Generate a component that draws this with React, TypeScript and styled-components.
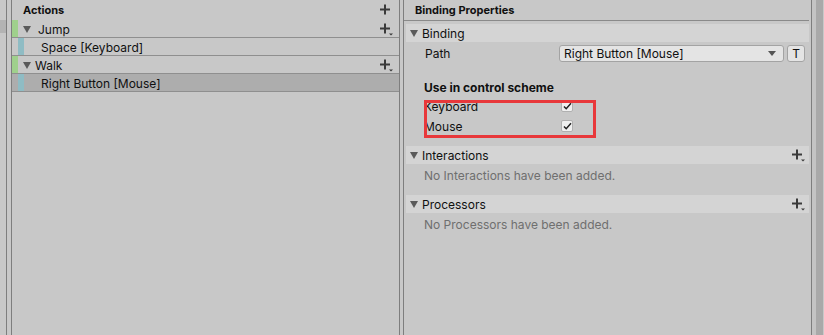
import React from "react"
import styled, { createGlobalStyle } from "styled-components"

const Global = createGlobalStyle`
    html, body {
        margin: 0;
        padding: 0;
        background: #c8c8c8;
    }
    body {
        font-family: Inter, "Noto Sans", sans-serif;
        font-size: 12px;
        color: #101010;
    }
`

const Window = styled.div`
    display: flex;
    width: 824px;
    height: 335px;
    overflow: hidden;
    background: #c8c8c8;
`

const Strip = styled.div<{ $w: number; $bg?: string }>`
    flex: 0 0 ${p => p.$w}px;
    background: ${p => p.$bg || "#c8c8c8"};
    position: relative;
`

const Line = styled.div`
    flex: 0 0 1px;
    background: #7e7e7e;
`

const OtherTab = styled.div`
    margin-top: 20px;
    height: 13px;
    background: #b3b3b3;
`

const Panel = styled.div<{ $w: number }>`
    flex: 0 0 ${p => p.$w}px;
    display: flex;
    flex-direction: column;
`

const PanelHeader = styled.div<{ $line?: boolean }>`
    height: 20px;
    display: flex;
    align-items: center;
    justify-content: space-between;
    padding: 0 6px 0 11px;
    font-size: 11px;
    font-weight: 700;
    box-sizing: border-box;
    ${p => p.$line && "border-bottom: 1px solid #8a8a8a; margin-right: 2px; height: 21px;"}
`

const Row = styled.div<{ $selected?: boolean }>`
    height: 18px;
    box-sizing: border-box;
    display: flex;
    align-items: center;
    border-bottom: 1px solid #8f8f8f;
    background: ${p => (p.$selected ? "#adadad" : "transparent")};
    padding-right: 6px;
    padding-top: 1px;
`

const Bar = styled.div<{ $color: string; $indent?: number }>`
    width: 6px;
    align-self: stretch;
    margin: -1px 0 0 ${p => p.$indent || 0}px;
    background: ${p => p.$color};
`

const Triangle = styled.span`
    width: 0;
    height: 0;
    border-left: 4px solid transparent;
    border-right: 4px solid transparent;
    border-top: 7px solid #5a5a5a;
    margin: 0 4px 0 5px;
`

const Label = styled.span<{ $pad?: number }>`
    flex: 1;
    padding-left: ${p => p.$pad || 0}px;
    white-space: nowrap;
`

const PlusIcon = ({ more }: { more?: boolean }) => (
    <svg width="13" height="13" viewBox="0 0 13 13">
        <path d="M5 0.5v10M0 5.5h10" stroke="#3a3a3a" strokeWidth="2" />
        {more && <path d="M9 10.5h4l-2 2z" fill="#3a3a3a" />}
    </svg>
)

const Foldout = styled.div<{ $top?: number }>`
    height: 18px;
    margin: ${p => p.$top || 0}px 2px 0 2px;
    background: #d4d4d4;
    display: flex;
    align-items: center;
    padding-right: 4px;
    font-size: 12px;

    ${Triangle} {
        margin: 0 4px 0 4px;
    }
`

const Field = styled.div`
    height: 19px;
    margin: 2px 6px 0 21px;
    display: flex;
    align-items: center;
    font-size: 12px;
`

const FieldLabel = styled.span`
    width: 134px;
`

const Dropdown = styled.div`
    flex: 1;
    height: 17px;
    box-sizing: border-box;
    border: 1px solid #a3a3a3;
    border-radius: 3px;
    background: #e4e4e4;
    display: flex;
    align-items: center;
    justify-content: space-between;
    padding: 0 7px 0 4px;

    &::after {
        content: "";
        border-left: 4px solid transparent;
        border-right: 4px solid transparent;
        border-top: 5px solid #555;
    }
`

const SmallButton = styled.div`
    width: 18px;
    height: 17px;
    margin-left: 3px;
    box-sizing: border-box;
    border: 1px solid #a3a3a3;
    border-radius: 3px;
    background: #e4e4e4;
    display: flex;
    align-items: center;
    justify-content: center;
    font-size: 12px;
`

const SectionTitle = styled.div`
    margin: 18px 0 0 20px;
    height: 14px;
    line-height: 14px;
    font-weight: 700;
    font-size: 12px;
`

const SchemeList = styled.div`
    position: relative;
    margin-top: 1px;
`

const SchemeRow = styled.div`
    height: 20px;
    display: flex;
    align-items: center;
    padding-left: 20px;
    font-size: 12px;
`

const SchemeName = styled.span`
    width: 137px;
`

const Check = styled.span`
    width: 12px;
    height: 12px;
    box-sizing: border-box;
    border: 1px solid #b0b0b0;
    border-radius: 2px;
    background: #f0f0f0;
    display: flex;
    align-items: center;
    justify-content: center;
`

const Highlight = styled.div`
    position: absolute;
    left: 20px;
    top: 4px;
    width: 172px;
    height: 38px;
    border: 3px solid #e8383b;
    box-sizing: border-box;
    pointer-events: none;
`

const Empty = styled.div`
    height: 14px;
    margin: 5px 0 0 20px;
    color: #6f6f6f;
    font-size: 12px;
    line-height: 14px;
`

const CheckMark = () => (
    <svg width="9" height="8" viewBox="0 0 9 8">
        <path d="M1 4.5l2.2 2.2L8 1.3" stroke="#222" strokeWidth="1.5" fill="none" />
    </svg>
)

export default function App() {
    return (
        <>
            <Global />
            <Window>
                <Strip $w={6}>
                    <OtherTab />
                </Strip>
                <Line />
                <Strip $w={4} />
                <Line />
                <Panel $w={387}>
                    <PanelHeader>
                        <span>Actions</span>
                        <PlusIcon />
                    </PanelHeader>
                    <Row>
                        <Bar $color="#9fd08c" />
                        <Triangle />
                        <Label $pad={3}>Jump</Label>
                        <PlusIcon more />
                    </Row>
                    <Row>
                        <Bar $color="#8fbcc4" $indent={6} />
                        <Label $pad={17}>Space [Keyboard]</Label>
                    </Row>
                    <Row>
                        <Bar $color="#9fd08c" />
                        <Triangle />
                        <Label>Walk</Label>
                        <PlusIcon more />
                    </Row>
                    <Row $selected>
                        <Bar $color="#8fbcc4" $indent={6} />
                        <Label $pad={17}>Right Button [Mouse]</Label>
                    </Row>
                </Panel>
                <Line />
                <Strip $w={3} />
                <Line />
                <Panel $w={407}>
                    <PanelHeader $line>
                        <span>Binding Properties</span>
                    </PanelHeader>
                    <Foldout $top={3}>
                        <Triangle />
                        <Label>Binding</Label>
                    </Foldout>
                    <Field>
                        <FieldLabel>Path</FieldLabel>
                        <Dropdown>Right Button [Mouse]</Dropdown>
                        <SmallButton>T</SmallButton>
                    </Field>
                    <SectionTitle>Use in control scheme</SectionTitle>
                    <SchemeList>
                        <SchemeRow>
                            <SchemeName>Keyboard</SchemeName>
                            <Check><CheckMark /></Check>
                        </SchemeRow>
                        <SchemeRow>
                            <SchemeName>Mouse</SchemeName>
                            <Check><CheckMark /></Check>
                        </SchemeRow>
                        <Highlight />
                    </SchemeList>
                    <Foldout $top={10}>
                        <Triangle />
                        <Label>Interactions</Label>
                        <PlusIcon more />
                    </Foldout>
                    <Empty>No Interactions have been added.</Empty>
                    <Foldout $top={12}>
                        <Triangle />
                        <Label>Processors</Label>
                        <PlusIcon more />
                    </Foldout>
                    <Empty>No Processors have been added.</Empty>
                </Panel>
                <Line />
                <Strip $w={4} $bg="#c4c4c4" />
                <Strip $w={7} $bg="#a9a9a9" />
            </Window>
        </>
    )
}
